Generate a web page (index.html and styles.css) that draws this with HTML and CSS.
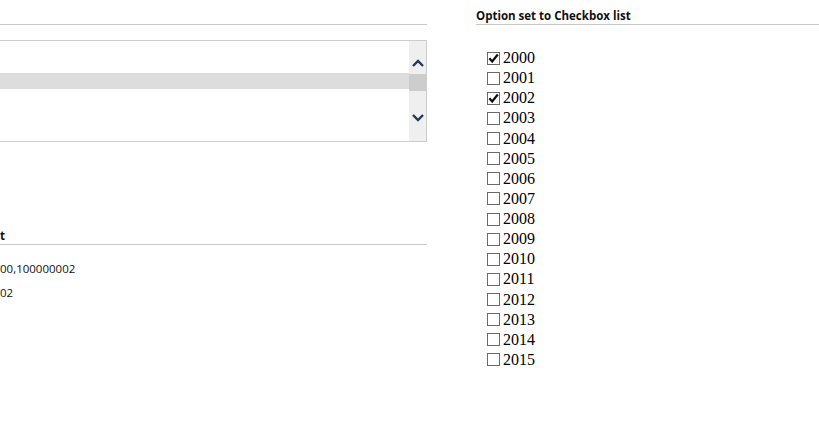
FILE: index.html
```html
<!DOCTYPE html>
<html>
<head>
<meta charset="utf-8">
<link rel="stylesheet" href="styles.css">
</head>
<body>
<div class="page">
  <div class="col-left">
    <div class="hd"></div>
    <div class="listbox">
      <div class="options">
        <div class="opt"></div>
        <div class="opt"></div>
        <div class="opt sel"></div>
        <div class="opt"></div>
        <div class="opt"></div>
        <div class="opt"></div>
      </div>
      <div class="scrollbar">
        <div class="sb-up">
          <svg width="12" height="8" viewBox="0 0 12 8"><path d="M1 7 L6 2 L11 7" fill="none" stroke="#1f3b5c" stroke-width="2.4"/></svg>
        </div>
        <div class="sb-thumb"></div>
        <div class="sb-down">
          <svg width="12" height="8" viewBox="0 0 12 8"><path d="M1 1 L6 6 L11 1" fill="none" stroke="#1f3b5c" stroke-width="2.4"/></svg>
        </div>
      </div>
    </div>
    <div class="hd hd-second">t</div>
    <div class="values">
      <div class="val">00,100000002</div>
      <div class="val">02</div>
    </div>
  </div>
  <div class="col-right">
    <div class="hd">Option set to Checkbox list</div>
    <ul class="checks">
      <li><span class="box"><svg width="11" height="11" viewBox="0 0 11 11"><path d="M1.4 5.2 L4.2 8.4 L9.8 1.6" fill="none" stroke="#111" stroke-width="2.3"/></svg></span>2000</li>
      <li><span class="box"></span>2001</li>
      <li><span class="box"><svg width="11" height="11" viewBox="0 0 11 11"><path d="M1.4 5.2 L4.2 8.4 L9.8 1.6" fill="none" stroke="#111" stroke-width="2.3"/></svg></span>2002</li>
      <li><span class="box"></span>2003</li>
      <li><span class="box"></span>2004</li>
      <li><span class="box"></span>2005</li>
      <li><span class="box"></span>2006</li>
      <li><span class="box"></span>2007</li>
      <li><span class="box"></span>2008</li>
      <li><span class="box"></span>2009</li>
      <li><span class="box"></span>2010</li>
      <li><span class="box"></span>2011</li>
      <li><span class="box"></span>2012</li>
      <li><span class="box"></span>2013</li>
      <li><span class="box"></span>2014</li>
      <li><span class="box"></span>2015</li>
    </ul>
  </div>
</div>
</body>
</html>
```
FILE: styles.css
```css
html, body {
  margin: 0;
  padding: 0;
  background: #ffffff;
}
.page {
  display: flex;
  gap: 49px;
  width: 819px;
  height: 430px;
  overflow: hidden;
}
.col-left {
  width: 427px;
  flex: none;
  display: flex;
  flex-direction: column;
}
.col-right {
  flex: 1;
  display: flex;
  flex-direction: column;
}
.hd {
  box-sizing: border-box;
  height: 25px;
  padding-top: 8px;
  font-family: "Open Sans", "Liberation Sans", sans-serif;
  font-weight: bold;
  font-size: 11.5px;
  line-height: 16px;
  color: #111;
  border-bottom: 1px solid #c8c8c8;
}
.listbox {
  box-sizing: border-box;
  margin-top: 15px;
  height: 102px;
  border: 1px solid #cccccc;
  border-left: none;
  display: flex;
}
.options {
  flex: 1;
  display: flex;
  flex-direction: column;
}
.opt {
  height: 16px;
  flex: none;
}
.opt.sel {
  background: #dddddd;
}
.scrollbar {
  width: 17px;
  flex: none;
  background: #efefef;
  display: flex;
  flex-direction: column;
}
.sb-up {
  height: 33px;
  display: flex;
  justify-content: center;
  align-items: flex-start;
  padding-top: 18px;
  box-sizing: border-box;
}
.sb-thumb {
  height: 17px;
  background: #cdcdcd;
}
.sb-down {
  flex: 1;
  display: flex;
  justify-content: center;
  align-items: flex-start;
  padding-top: 23px;
}
.hd-second {
  margin-top: 78px;
}
.values {
  padding-top: 12px;
  font-family: "Open Sans", "Liberation Sans", sans-serif;
  font-size: 11.5px;
  color: #111;
}
.val {
  line-height: 24px;
}
.checks {
  list-style: none;
  margin: 23px 0 0 11px;
  padding: 0;
  font-family: "Liberation Serif", "Times New Roman", serif;
  font-size: 16px;
  color: #000;
}
.checks li {
  height: 20.13px;
  display: flex;
  align-items: center;
  gap: 3px;
}
.box {
  box-sizing: border-box;
  width: 13px;
  height: 13px;
  border: 1px solid #6a6a6a;
  display: flex;
  align-items: center;
  justify-content: center;
  flex: none;
}
.box svg {
  display: block;
}
```
